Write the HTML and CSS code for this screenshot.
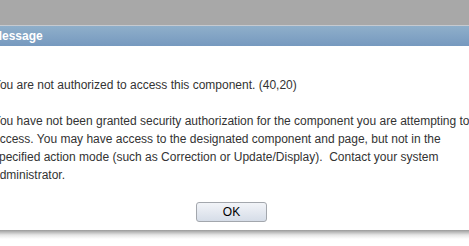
FILE: index.html
```html
<!DOCTYPE html>
<html>
<head>
<meta charset="utf-8">
<link rel="stylesheet" href="styles.css">
</head>
<body>
<div class="overlay"></div>
<div class="dialog">
  <div class="titlebar"><span class="title">Message</span></div>
  <div class="content">
    <p class="msg">You are not authorized to access this component. (40,20)</p>
    <p class="explain">You have not been granted security authorization for the component you are attempting to access. You may have access to the designated component and page, but not in the specified action mode (such as Correction or Update/Display).&nbsp; Contact your system administrator.</p>
    <div class="actions"><button class="ok">OK</button></div>
  </div>
</div>
<div class="shadow"></div>
</body>
</html>
```
FILE: styles.css
```css
html, body {
  margin: 0;
  padding: 0;
}
body {
  width: 469px;
  height: 246px;
  overflow: hidden;
  background: #ffffff;
  font-family: "Liberation Sans", Arial, sans-serif;
}
.overlay {
  height: 25px;
  background: #a8a8a8;
}
.dialog {
  width: 520px;
  margin-left: -20px;
  background: #ffffff;
}
.titlebar {
  border-top: 1px solid #c6cad0;
  background: linear-gradient(#8fafca, #7699bf);
  padding-left: 12px;
  box-sizing: border-box;
  height: 21px;
  display: flex;
  align-items: center;
}
.title {
  color: #ffffff;
  font-weight: bold;
  font-size: 12px;
}
.content {
  padding: 0 0 0 13px;
  width: 490px;
  box-sizing: border-box;
  color: #333333;
  font-size: 12px;
  line-height: 18px;
}
.msg {
  margin: 0;
  padding-top: 30px;
}
.explain {
  margin: 18px 0 0 0;
}
.actions {
  display: flex;
  justify-content: center;
  padding-top: 18px;
  height: 46px;
  box-sizing: border-box;
  width: 469px;
  margin-left: 4px;
}
.ok {
  width: 71px;
  height: 20px;
  border: 1px solid #a3a7ad;
  border-radius: 3px;
  background: linear-gradient(#f2f4f8, #d6dde8);
  font-family: "Liberation Sans", Arial, sans-serif;
  font-size: 12px;
  color: #000000;
  padding: 0;
}
.shadow {
  height: 14px;
  background: linear-gradient(#9a9a9a, #e6e6e6 5px, #ffffff 9px);
}
```
